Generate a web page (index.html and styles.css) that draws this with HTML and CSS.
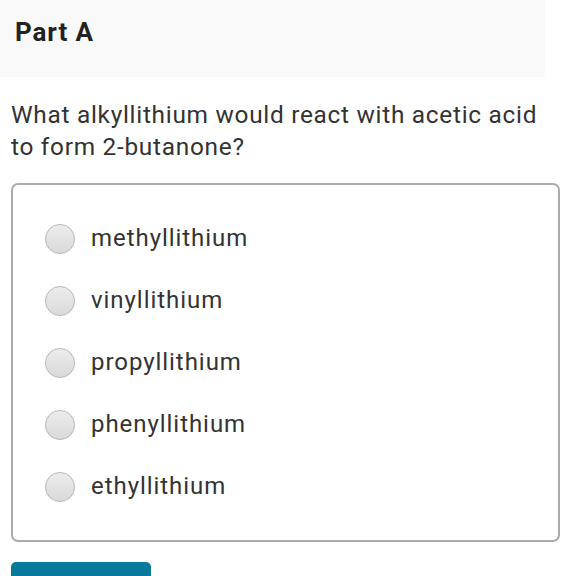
FILE: index.html
```html
<!DOCTYPE html>
<html>
<head>
<meta charset="utf-8">
<link rel="stylesheet" href="styles.css">
</head>
<body>
<div class="header"><h2 class="title">Part A</h2></div>
<p class="question">What alkyllithium would react with acetic acid to form 2-butanone?</p>
<div class="choices">
  <label class="choice"><span class="radio"></span><span class="label">methyllithium</span></label>
  <label class="choice"><span class="radio"></span><span class="label">vinyllithium</span></label>
  <label class="choice"><span class="radio"></span><span class="label">propyllithium</span></label>
  <label class="choice"><span class="radio"></span><span class="label">phenyllithium</span></label>
  <label class="choice"><span class="radio"></span><span class="label">ethyllithium</span></label>
</div>
<button class="submit"></button>
</body>
</html>
```
FILE: styles.css
```css
html, body {
  margin: 0;
  padding: 0;
  background: #fff;
  font-family: Roboto, "Liberation Sans", sans-serif;
  overflow: hidden;
}
.header {
  width: 545px;
  height: 77px;
  background: #f9f9f9;
  box-sizing: border-box;
  padding: 17px 0 0 15px;
}
.title {
  margin: 0;
  font-size: 26px;
  line-height: 30px;
  font-weight: 700;
  letter-spacing: 0.9px;
  color: #222;
}
.question {
  margin: 22px 0 0 11px;
  width: 545px;
  font-size: 24.4px;
  line-height: 32px;
  letter-spacing: 0.72px;
  color: #333;
}
.choices {
  margin: 20px 0 0 11px;
  width: 549px;
  height: 359px;
  box-sizing: border-box;
  border: 2px solid #ababab;
  border-radius: 7px;
  padding: 23px 0 0 32px;
  display: flex;
  flex-direction: column;
}
.choice {
  height: 62px;
  display: flex;
  align-items: center;
  gap: 16px;
}
.radio {
  width: 28px;
  height: 28px;
  border-radius: 50%;
  border: 1px solid #b9b9b9;
  background: linear-gradient(#ececec, #dadada);
  box-shadow: 0 0 1px #ddd;
}
.label {
  font-size: 24px;
  letter-spacing: 0.95px;
  color: #333;
  position: relative;
  top: -1px;
}
.submit {
  display: block;
  margin: 20px 0 0 11px;
  width: 140px;
  height: 40px;
  border: none;
  border-radius: 5px;
  background: #077a9b;
}
```
